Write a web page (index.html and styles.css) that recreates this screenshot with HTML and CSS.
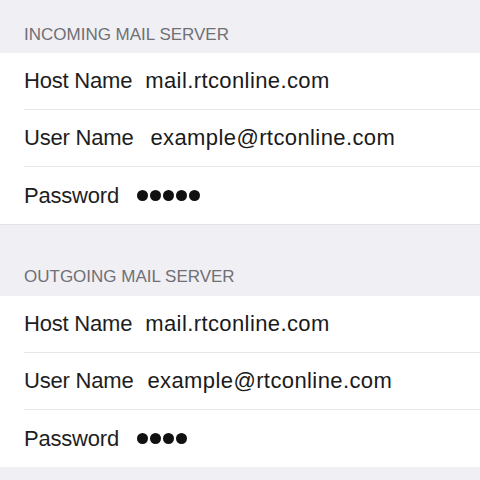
FILE: index.html
```html
<!DOCTYPE html>
<html>
<head>
<meta charset="utf-8">
<link rel="stylesheet" href="styles.css">
</head>
<body>
<div class="screen">
  <div class="header first">INCOMING MAIL SERVER</div>
  <div class="group">
    <div class="row"><span class="label">Host Name</span><span class="value g13">mail.rtconline.com</span></div>
    <div class="row"><span class="label">User Name</span><span class="value g17">example@rtconline.com</span></div>
    <div class="row last"><span class="label">Password</span><span class="dots g18"><i></i><i></i><i></i><i></i><i></i></span></div>
  </div>
  <div class="header second">OUTGOING MAIL SERVER</div>
  <div class="group">
    <div class="row"><span class="label">Host Name</span><span class="value g13">mail.rtconline.com</span></div>
    <div class="row"><span class="label">User Name</span><span class="value g14">example@rtconline.com</span></div>
    <div class="row last"><span class="label">Password</span><span class="dots g18"><i></i><i></i><i></i><i></i></span></div>
  </div>
  <div class="footer"></div>
</div>
</body>
</html>
```
FILE: styles.css
```css
html, body {
  margin: 0;
  padding: 0;
  background: #efeff4;
}
.screen {
  width: 480px;
  height: 480px;
  overflow: hidden;
  background: #efeff4;
  font-family: "Liberation Sans", Arial, sans-serif;
}
.header {
  box-sizing: border-box;
  padding-left: 24px;
  color: #707075;
  font-size: 17px;
  display: flex;
  align-items: flex-end;
}
.header.first {
  height: 53px;
  padding-bottom: 8px;
}
.header.second {
  height: 72px;
  padding-bottom: 9px;
  border-top: 1px solid #e4e4e8;
}
.group {
  background: #ffffff;
  padding-left: 24px;
}
.row {
  height: 57px;
  box-sizing: border-box;
  display: flex;
  align-items: center;
  border-bottom: 1px solid #e6e6e8;
  color: #1e1e1e;
  font-size: 22px;
}
.row.last {
  border-bottom: none;
}
.label {
  letter-spacing: -0.2px;
}
.value {
  color: #1a1a1a;
  letter-spacing: 0.4px;
}
.g13 { margin-left: 13px; }
.g14 { margin-left: 14px; }
.g17 { margin-left: 17px; }
.g18 { margin-left: 18px; }
.dots {
  display: flex;
  gap: 2px;
}
.dots i {
  display: block;
  width: 11px;
  height: 11px;
  border-radius: 50%;
  background: #111;
}
.footer {
  height: 20px;
}
```
